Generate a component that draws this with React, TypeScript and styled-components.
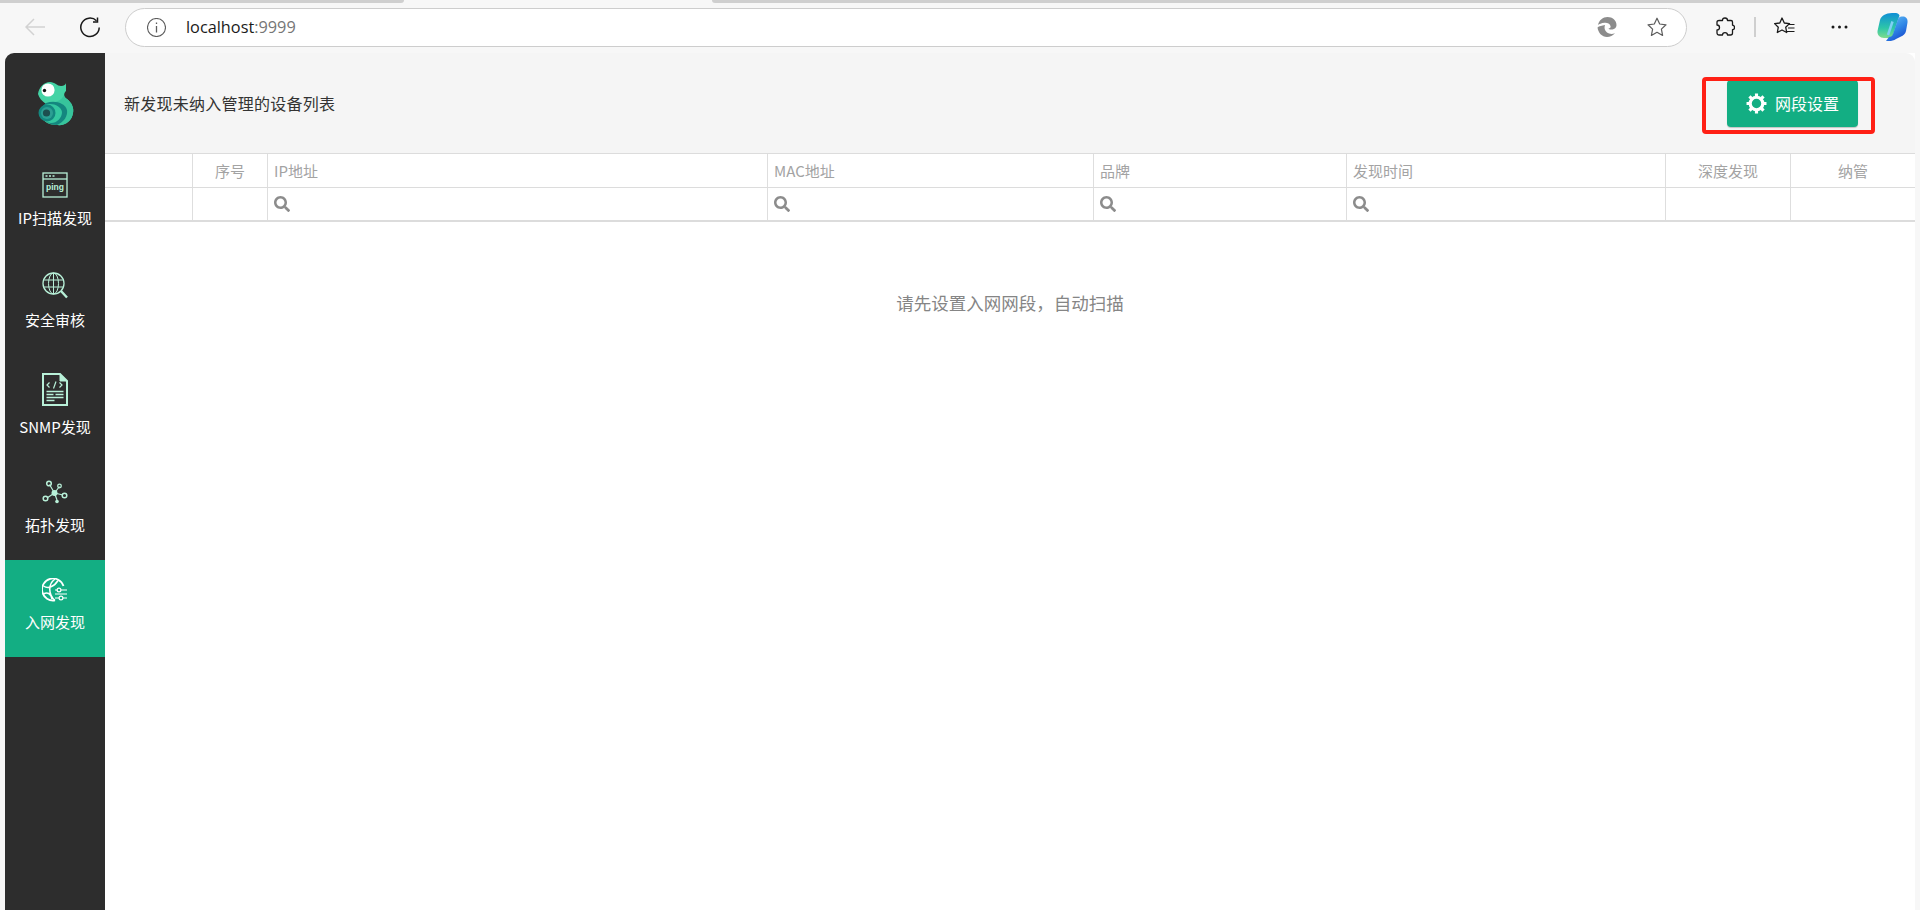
import React from 'react';
import styled, { createGlobalStyle } from 'styled-components';
import { FaSearch } from 'react-icons/fa';

const Global = createGlobalStyle`
  html, body { margin: 0; padding: 0; height: 100%; background: #f7f7f7; }
  #root { height: 100%; }
  * { box-sizing: border-box; }
`;

const Page = styled.div`
  width: 1920px;
  height: 910px;
  overflow: hidden;
  display: flex;
  flex-direction: column;
  font-family: "Noto Sans CJK SC", "Liberation Sans", sans-serif;
`;

const TabStrip = styled.div`
  height: 3px;
  display: flex;
  justify-content: space-between;
  background: #f7f7f7;
`;

const TabEdge = styled.div<{ $w: number; $left?: boolean }>`
  width: ${(p) => p.$w}px;
  background: #cfcfcf;
  border-bottom-right-radius: ${(p) => (p.$left ? 3 : 0)}px;
  border-bottom-left-radius: ${(p) => (p.$left ? 0 : 3)}px;
`;

const Toolbar = styled.div`
  height: 50px;
  display: flex;
  align-items: center;
  padding: 0 12px 2px 25px;
  position: relative;
`;

const ToolIcon = styled.svg<{ $ml?: number }>`
  display: block;
  flex: none;
  margin-left: ${(p) => p.$ml ?? 0}px;
`;

const AddressBar = styled.div`
  width: 1563px;
  height: 39px;
  margin-left: 25px;
  border: 1.5px solid #cdcdcd;
  border-radius: 20px;
  background: #fff;
  display: flex;
  align-items: center;
  padding: 0 19px 0 21px;
`;

const Url = styled.div`
  flex: 1;
  margin-left: 20px;
  font-family: "Open Sans", sans-serif;
  font-size: 16.3px;
  color: #1a1a1a;
`;

const UrlPort = styled.span`
  color: #767676;
`;

const Separator = styled.div`
  width: 2px;
  height: 20px;
  margin-left: 19px;
  background: #cfcfcf;
`;

const AppRow = styled.div`
  flex: 1;
  display: flex;
  margin: 0 5px;
  min-height: 0;
`;

const Sidebar = styled.nav`
  width: 100px;
  flex: none;
  background: #2d2d2d;
  border-top-left-radius: 9px;
  display: flex;
  flex-direction: column;
`;

const LogoBox = styled.div`
  height: 102px;
  padding: 28px 0 0 32px;
`;

const NavItem = styled.div<{ $h: number; $pt: number; $gap: number; $active?: boolean }>`
  height: ${(p) => p.$h}px;
  padding-top: ${(p) => p.$pt}px;
  display: flex;
  flex-direction: column;
  align-items: center;
  gap: ${(p) => p.$gap}px;
  background: ${(p) => (p.$active ? '#13ae83' : 'transparent')};
`;

const NavLabel = styled.div`
  font-size: 15px;
  line-height: 20px;
  color: #fff;
  white-space: nowrap;
`;

const NavIcon = styled.svg`
  display: block;
  flex: none;
`;

const Main = styled.main`
  flex: 1;
  min-width: 0;
  display: flex;
  flex-direction: column;
  background: #fff;
`;

const Header = styled.header`
  height: 100px;
  flex: none;
  background: #f5f5f5;
  border-top-right-radius: 9px;
  display: flex;
  align-items: center;
  justify-content: space-between;
  padding: 0 57px 0 19px;
`;

const Title = styled.div`
  font-size: 16px;
  letter-spacing: 0.25px;
  color: #333;
`;

const ButtonFrame = styled.div`
  position: relative;
`;

const Button = styled.button`
  width: 131px;
  height: 47px;
  border: 0;
  border-radius: 4px;
  background: #13ae83;
  color: #fff;
  font: inherit;
  font-size: 16px;
  display: flex;
  align-items: center;
  justify-content: center;
  gap: 8px;
  padding: 0;
  box-shadow: 0 1px 1px rgba(0, 0, 0, 0.2);
`;

const Highlight = styled.div`
  position: absolute;
  left: -25px;
  top: -3px;
  width: 173px;
  height: 57px;
  border: 4px solid #ff2015;
  border-radius: 4px;
  pointer-events: none;
`;

const Table = styled.div`
  border-top: 1px solid #dcdcdc;
`;

const Row = styled.div<{ $thick?: boolean }>`
  display: grid;
  grid-template-columns: 88px 75px 500px 326px 253px 319px 125px 124px;
  height: 34px;
  border-bottom: ${(p) => (p.$thick ? 2 : 1)}px solid #dcdcdc;
`;

const Cell = styled.div<{ $center?: boolean }>`
  border-right: 1px solid #dedede;
  display: flex;
  align-items: center;
  justify-content: ${(p) => (p.$center ? 'center' : 'flex-start')};
  padding-left: ${(p) => (p.$center ? 0 : 6)}px;
  font-size: 15px;
  color: #a3a3a3;
  &:last-child {
    border-right: 0;
  }
`;

const SearchGlyph = styled(FaSearch)`
  color: #8c8c8c;
  font-size: 16px;
`;

const Empty = styled.div`
  text-align: center;
  padding-top: 68px;
  font-size: 17.5px;
  line-height: 26px;
  color: #858585;
`;

const mint = '#b8f0d8';

const Logo = () => (
  <svg width="37" height="45" viewBox="0 0 37 45">
    <path d="M1 13 C2 6 7 1 13 1 C18 1 20 5 24 5 C27 5 29 3 29 2 L29 10 C26 13 27 16 30 18 C35 22 37 27 36 32 C35 40 28 45 20 44 C12 44 6 41 4 34 C3 30 6 26 9 23 C5 20 2 17 1 13 Z" fill="#45d3a5" />
    <path d="M14 22 C20 21 25 19 27 14 C27 16 28 17 30 18 C35 22 37 27 36 32 C35 40 28 45 20 44 C27 41 31 35 30 29 C29 25 22 21 14 22 Z" fill="#37c49c" />
    <path d="M9 22 C18 19 28 22 30 29 C31 35 27 41 20 44 C14 44 7 41 4 35 C3 29 5 25 9 22 Z" fill="#14877f" />
    <path d="M8 24 C15 21 24 25 25 31 C25 37 20 42 14 42 C9 42 4 38 3 33 C3 29 5 26 8 24 Z" fill="#34c8a0" />
    <circle cx="10" cy="32" r="8.500" fill="#14877f" />
    <circle cx="10" cy="32" r="6" fill="#2c9f93" />
    <circle cx="9.500" cy="32" r="3.600" fill="#1d4e4f" />
    <circle cx="11" cy="9" r="6.600" fill="#fff" />
    <circle cx="7.500" cy="9.500" r="1.700" fill="#111" />
  </svg>
);

const GearIcon = () => (
  <svg width="21" height="21" viewBox="0 0 20 20" fill="none" stroke="#fff">
    <circle cx="10" cy="10" r="6" strokeWidth="3" />
    <path
      d="M10 0.500v3M10 16.500v3M0.500 10h3M16.500 10h3M3.300 3.300l2.100 2.100M14.600 14.600l2.100 2.100M3.300 16.700l2.100-2.100M14.600 5.400l2.100-2.100"
      strokeWidth="3"
    />
  </svg>
);

const PingIcon = () => (
  <NavIcon width="26" height="26" viewBox="0 0 26 26" fill="none">
    <rect x="1" y="1" width="24" height="24" stroke={mint} strokeWidth="1.300" />
    <path d="M1 7h24" stroke={mint} strokeWidth="1.300" />
    <path d="M3.500 4h2M7 4h2M10.500 4h2" stroke={mint} strokeWidth="1.600" />
    <text x="13" y="17.500" textAnchor="middle" fontFamily="Liberation Sans, sans-serif" fontWeight="700" fontSize="8.500" fill={mint}>
      ping
    </text>
  </NavIcon>
);

const GlobeIcon = () => (
  <NavIcon width="26" height="27" viewBox="0 0 26 27" fill="none" stroke={mint}>
    <circle cx="11.500" cy="11.500" r="10.500" strokeWidth="1.300" />
    <ellipse cx="11.500" cy="11.500" rx="5" ry="10.500" strokeWidth="1" />
    <path d="M11.500 1v21M1.500 8h20M1.500 15h20" strokeWidth="1" />
    <path d="M19 19l6 6.500" strokeWidth="2.400" />
  </NavIcon>
);

const DocIcon = () => (
  <NavIcon width="26" height="33" viewBox="0 0 26 33" fill="none" stroke={mint}>
    <path d="M1 1h17l7 7v24H1z" strokeWidth="2" />
    <path d="M18 1l7 7h-7z" fill={mint} strokeWidth="1" />
    <path d="M7.500 9.500L5 12l2.500 2.500M17.500 9.500L20 12l-2.500 2.500M14 8.500l-2.500 7" strokeWidth="1.200" />
    <path d="M4.500 18.500h17M4.500 21.500h7M13.500 21.500h8M4.500 24.500h17M4.500 27.500h8" strokeWidth="1.300" />
  </NavIcon>
);

const TopoIcon = () => (
  <NavIcon width="26" height="25" viewBox="0 0 26 25" fill="none" stroke={mint}>
    <path d="M12.500 13L7.500 4.500M12.500 13L17.500 6.500M12.500 13L21 15M12.500 13L5 18M12.500 13L15 20" strokeWidth="1.200" />
    <circle cx="12.500" cy="13" r="3" fill={mint} strokeWidth="0" />
    <circle cx="7" cy="3.500" r="2.300" strokeWidth="1.500" />
    <circle cx="17.500" cy="6" r="1.800" strokeWidth="1.300" />
    <circle cx="22.500" cy="15.500" r="2.300" strokeWidth="1.500" />
    <circle cx="3.500" cy="18.500" r="2.300" strokeWidth="1.500" />
    <circle cx="15" cy="21.500" r="1.800" fill={mint} strokeWidth="0" />
  </NavIcon>
);

const NetIcon = () => (
  <NavIcon width="26" height="24" viewBox="0 0 26 24" fill="none" stroke="#fff">
    <path d="M21.500 8A11 11 0 1 0 13 22.300" strokeWidth="1.800" />
    <path d="M13 1C6 6 6 16 13 22.500M1.500 8C6 11 12 9 16 2.500M1.500 16C5 14 9 15 10 21" strokeWidth="1.500" />
    <path d="M13 12h2M19 12h6M13 16h12M13 20h4M21 20h4" strokeWidth="1.200" />
    <circle cx="17" cy="12" r="1.900" strokeWidth="1.200" />
    <circle cx="19" cy="20" r="1.900" strokeWidth="1.200" />
  </NavIcon>
);

const columns: { label: string; center?: boolean; search?: boolean }[] = [
  { label: '', center: true },
  { label: '序号', center: true },
  { label: 'IP地址', search: true },
  { label: 'MAC地址', search: true },
  { label: '品牌', search: true },
  { label: '发现时间', search: true },
  { label: '深度发现', center: true },
  { label: '纳管', center: true },
];

const navItems = [
  { label: 'IP扫描发现', h: 100, pt: 17, gap: 10, icon: <PingIcon /> },
  { label: '安全审核', h: 104, pt: 17, gap: 11, icon: <GlobeIcon /> },
  { label: 'SNMP发现', h: 104, pt: 14, gap: 11, icon: <DocIcon /> },
  { label: '拓扑发现', h: 97, pt: 17, gap: 10, icon: <TopoIcon /> },
  { label: '入网发现', h: 97, pt: 18, gap: 10, icon: <NetIcon />, active: true },
];

export default function App() {
  return (
    <Page>
      <Global />
      <TabStrip>
        <TabEdge $w={404} $left />
        <TabEdge $w={1208} />
      </TabStrip>
      <Toolbar>
        <ToolIcon width="20" height="18" viewBox="0 0 20 18" fill="none" stroke="#d2d2d2" strokeWidth="1.500">
          <path d="M20 9H1M9 1L1 9l8 8" />
        </ToolIcon>
        <ToolIcon $ml={35} width="20" height="21" viewBox="0 0 20 21" fill="none" stroke="#1a1a1a" strokeWidth="1.500">
          <path d="M16.500 3.800A9.200 9.200 0 1 0 19.200 10.500" />
          <path d="M17.500 0.500V5h-4.500" />
        </ToolIcon>
        <AddressBar>
          <ToolIcon width="19" height="19" viewBox="0 0 19 19" fill="none" stroke="#5c5c5c" strokeWidth="1.100">
            <circle cx="9.500" cy="9.500" r="9" />
            <path d="M9.500 8v6.500M9.500 4.500v1.500" strokeWidth="1.300" />
          </ToolIcon>
          <Url>
            localhost<UrlPort>:9999</UrlPort>
          </Url>
          <ToolIcon width="20" height="20" viewBox="0 0 20 20">
            <path d="M1 8C2 3 6 0 10.500 0 C15.500 0 19.500 3.500 19.500 8 C19.500 11 17 12.500 14.500 12.500 C12.500 12.500 11.500 12 11.500 11.500 C13 11.500 14 10.500 13.500 9 C12.800 6.500 10 5.500 7.500 5.800 C4.500 6.200 2 7 1 8 Z" fill="#8c8c8c" />
            <path d="M0.500 10.500C1 15.500 5 20 10 20 C13 20 16 18.500 18 16 C15.500 17.500 12 17 10 15.500 C7.500 13.500 7 10.500 8 8 C5 8.500 2 9 0.500 10.500 Z" fill="#8c8c8c" />
          </ToolIcon>
          <ToolIcon $ml={30} width="20" height="20" viewBox="0 0 20 20" fill="none" stroke="#5c5c5c" strokeWidth="1.200">
            <path d="M10 1.200l2.700 5.800 6.300.8-4.600 4.300 1.200 6.300L10 15.300l-5.600 3.100 1.200-6.300L1 7.800l6.300-.8z" strokeLinejoin="round" />
          </ToolIcon>
        </AddressBar>
        <ToolIcon $ml={29} width="19" height="20" viewBox="0 0 19 20" fill="none" stroke="#1a1a1a" strokeWidth="1.300" strokeLinejoin="round">
          <path d="M6.500 3.500C6.500 1.800 8 1 9 1c1.300 0 2.500 1 2.500 2.500h3.500c1 0 1.500.7 1.500 1.500v3.200c1.600 0 2 1.300 2 2.300s-.7 2.200-2 2.200V16c0 1-.6 2-2 2h-3c0-1.500-1-2.400-2.500-2.400S6.500 16.500 6.500 18H3c-1 0-2-.7-2-2v-3c1.500 0 2.500-1 2.500-2.500S2.500 8 1 8V5c0-1 .9-1.500 2-1.500z" />
        </ToolIcon>
        <Separator />
        <ToolIcon $ml={18} width="21" height="20" viewBox="0 0 21 20" fill="none" stroke="#1a1a1a" strokeWidth="1.300" strokeLinejoin="round">
          <path d="M8 1l2.300 5 5.200.6-3.800 3.600 1 5.300L8 13l-4.700 2.500 1-5.300L.6 6.600 5.800 6z" />
          <path d="M14 7.500h6.500M14 11h6.500M13 14.500h7.500" strokeWidth="1.200" />
        </ToolIcon>
        <ToolIcon $ml={36} width="17" height="4" viewBox="0 0 17 4" fill="#1a1a1a">
          <circle cx="2" cy="2" r="1.500" />
          <circle cx="8.500" cy="2" r="1.500" />
          <circle cx="15" cy="2" r="1.500" />
        </ToolIcon>
        <ToolIcon $ml={29} width="31" height="28" viewBox="0 0 31 28">
          <defs>
            <linearGradient id="cpA" x1="0" y1="0" x2="0" y2="1">
              <stop offset="0" stopColor="#0f8fd6" />
              <stop offset="0.6" stopColor="#2ec6a8" />
              <stop offset="1" stopColor="#7fdc8c" />
            </linearGradient>
            <linearGradient id="cpB" x1="0" y1="0" x2="0.600" y2="1">
              <stop offset="0" stopColor="#6cc4f7" />
              <stop offset="0.6" stopColor="#2f86e6" />
              <stop offset="1" stopColor="#1b4fd0" />
            </linearGradient>
          </defs>
          <path d="M7 2C9 .8 12 0 15 0h4c1.500 0 3 1 3.500 2.500L16 22c-.6 2-2 3-4 3H7C3 25 0 22 .5 18L3 7C3.500 5 5 3 7 2z" fill="url(#cpA)" />
          <path d="M19 26c-2 1.500-4.500 2-7 2H9l3-4c2 0 3.500-1 4-3l5-15c.5-1.500 2-2.500 3.500-2.500H26c3 0 5 2.500 4.500 6L29 18c-.5 3-3 4.500-5 5.500z" fill="url(#cpB)" />
          <path d="M15.500 8.500L11 22" stroke="#7fd0f5" strokeWidth="2.500" fill="none" />
        </ToolIcon>
      </Toolbar>
      <AppRow>
        <Sidebar>
          <LogoBox>
            <Logo />
          </LogoBox>
          {navItems.map((item) => (
            <NavItem key={item.label} $h={item.h} $pt={item.pt} $gap={item.gap} $active={item.active}>
              {item.icon}
              <NavLabel>{item.label}</NavLabel>
            </NavItem>
          ))}
        </Sidebar>
        <Main>
          <Header>
            <Title>新发现未纳入管理的设备列表</Title>
            <ButtonFrame>
              <Button>
                <GearIcon />
                网段设置
              </Button>
              <Highlight />
            </ButtonFrame>
          </Header>
          <Table>
            <Row>
              {columns.map((c, i) => (
                <Cell key={i} $center={c.center}>
                  {c.label}
                </Cell>
              ))}
            </Row>
            <Row $thick>
              {columns.map((c, i) => (
                <Cell key={i}>{c.search && <SearchGlyph />}</Cell>
              ))}
            </Row>
          </Table>
          <Empty>请先设置入网网段，自动扫描</Empty>
        </Main>
      </AppRow>
    </Page>
  );
}
